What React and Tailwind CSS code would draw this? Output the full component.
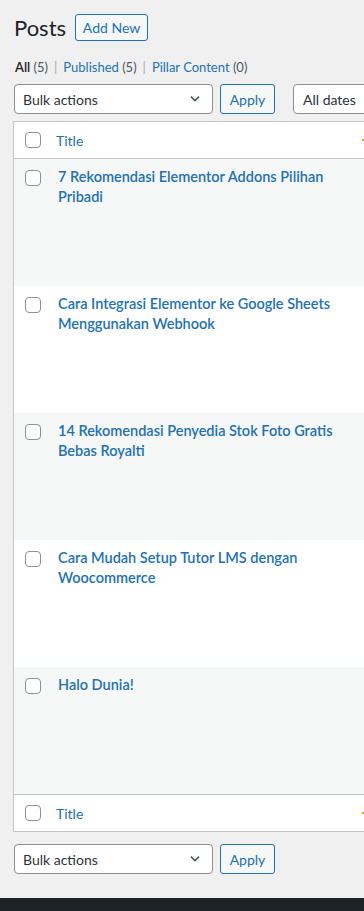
import React from 'react';

const posts = [
  '7 Rekomendasi Elementor Addons Pilihan Pribadi',
  'Cara Integrasi Elementor ke Google Sheets Menggunakan Webhook',
  '14 Rekomendasi Penyedia Stok Foto Gratis Bebas Royalti',
  'Cara Mudah Setup Tutor LMS dengan Woocommerce',
  'Halo Dunia!',
];

const Checkbox = () => (
  <span className="block w-4 h-4 shrink-0 rounded-[4px] border border-[#8c8f94] bg-white" />
);

const Chevron = () => (
  <svg width="16" height="16" viewBox="0 0 20 20" className="text-[#50575e]">
    <path d="M5 7l5 5 5-5" fill="none" stroke="currentColor" strokeWidth="2" />
  </svg>
);

const BulkActions = () => (
  <div className="flex items-center gap-[7px]">
    <div className="w-[199px] h-[30px] rounded-[4px] border border-[#8c8f94] bg-white flex items-center justify-between pl-[8px] pr-[9px] text-[14px] text-[#2c3338]">
      <span>Bulk actions</span>
      <Chevron />
    </div>
    <div className="w-[55px] h-[30px] rounded-[3px] border border-[#2271b1] bg-[#f6f7f7] flex items-center justify-center text-[14px] text-[#2271b1]">
      Apply
    </div>
  </div>
);

const HeaderRow = ({ top }) => (
  <div className={`relative h-[37px] flex items-center pl-[11px] bg-white ${top ? 'border-b' : 'border-t'} border-[#c3c4c7]`}>
    <Checkbox />
    <span className="ml-[15px] text-[14px] text-[#2271b1]">Title</span>
    <span className="absolute left-[348px] top-[17px] w-[2px] h-[2px] bg-[#dba617]" />
  </div>
);

export default function App() {
  return (
    <div className="w-[364px] h-[911px] overflow-hidden bg-[#f0f0f1] flex flex-col" style={{ fontFamily: 'Lato, "Liberation Sans", sans-serif' }}>
      <div className="flex-1 pl-[14px]">
        <div className="flex items-center gap-[9px] mt-[14px] h-[27px]">
          <h1 className="text-[22px] leading-none text-[#1d2327]">Posts</h1>
          <div className="w-[73px] h-[27px] rounded-[3px] border border-[#2271b1] bg-[#f6f7f7] flex items-center justify-center text-[14px] text-[#2271b1]">
            Add New
          </div>
        </div>

        <div className="mt-[17px] text-[13px] leading-[18px] flex gap-[6px] text-[#a7aaad] whitespace-nowrap pl-[1px]">
          <span>
            <span className="font-semibold text-[#1d2327]">All</span>{' '}
            <span className="text-[#50575e]">(5)</span>
          </span>
          <span>|</span>
          <span>
            <span className="text-[#2271b1]">Published</span>{' '}
            <span className="text-[#50575e]">(5)</span>
          </span>
          <span>|</span>
          <span>
            <span className="text-[#2271b1]">Pillar Content</span>{' '}
            <span className="text-[#50575e]">(0)</span>
          </span>
        </div>

        <div className="mt-[8px] flex items-center">
          <BulkActions />
          <div className="ml-[18px] w-[120px] h-[30px] shrink-0 rounded-[4px] border border-[#8c8f94] bg-white flex items-center pl-[9px] text-[14px] text-[#2c3338]">
            All dates
          </div>
        </div>

        <div className="mt-[7px] -ml-[1px] w-[420px] border border-[#c3c4c7] bg-white">
          <HeaderRow top />
          {posts.map((title, i) => (
            <div key={i} className={`h-[127px] flex items-start pt-[11px] pl-[11px] ${i % 2 === 0 ? 'bg-[#f6f7f7]' : 'bg-white'}`}>
              <Checkbox />
              <div className="ml-[17px] w-[285px] text-[14.5px] leading-[20px] -mt-[3px] font-semibold text-[#2271b1]">
                {title}
              </div>
            </div>
          ))}
          <HeaderRow />
        </div>

        <div className="mt-[12px]">
          <BulkActions />
        </div>
      </div>
      <div className="h-[13px] bg-[#1d2327]" />
    </div>
  );
}
